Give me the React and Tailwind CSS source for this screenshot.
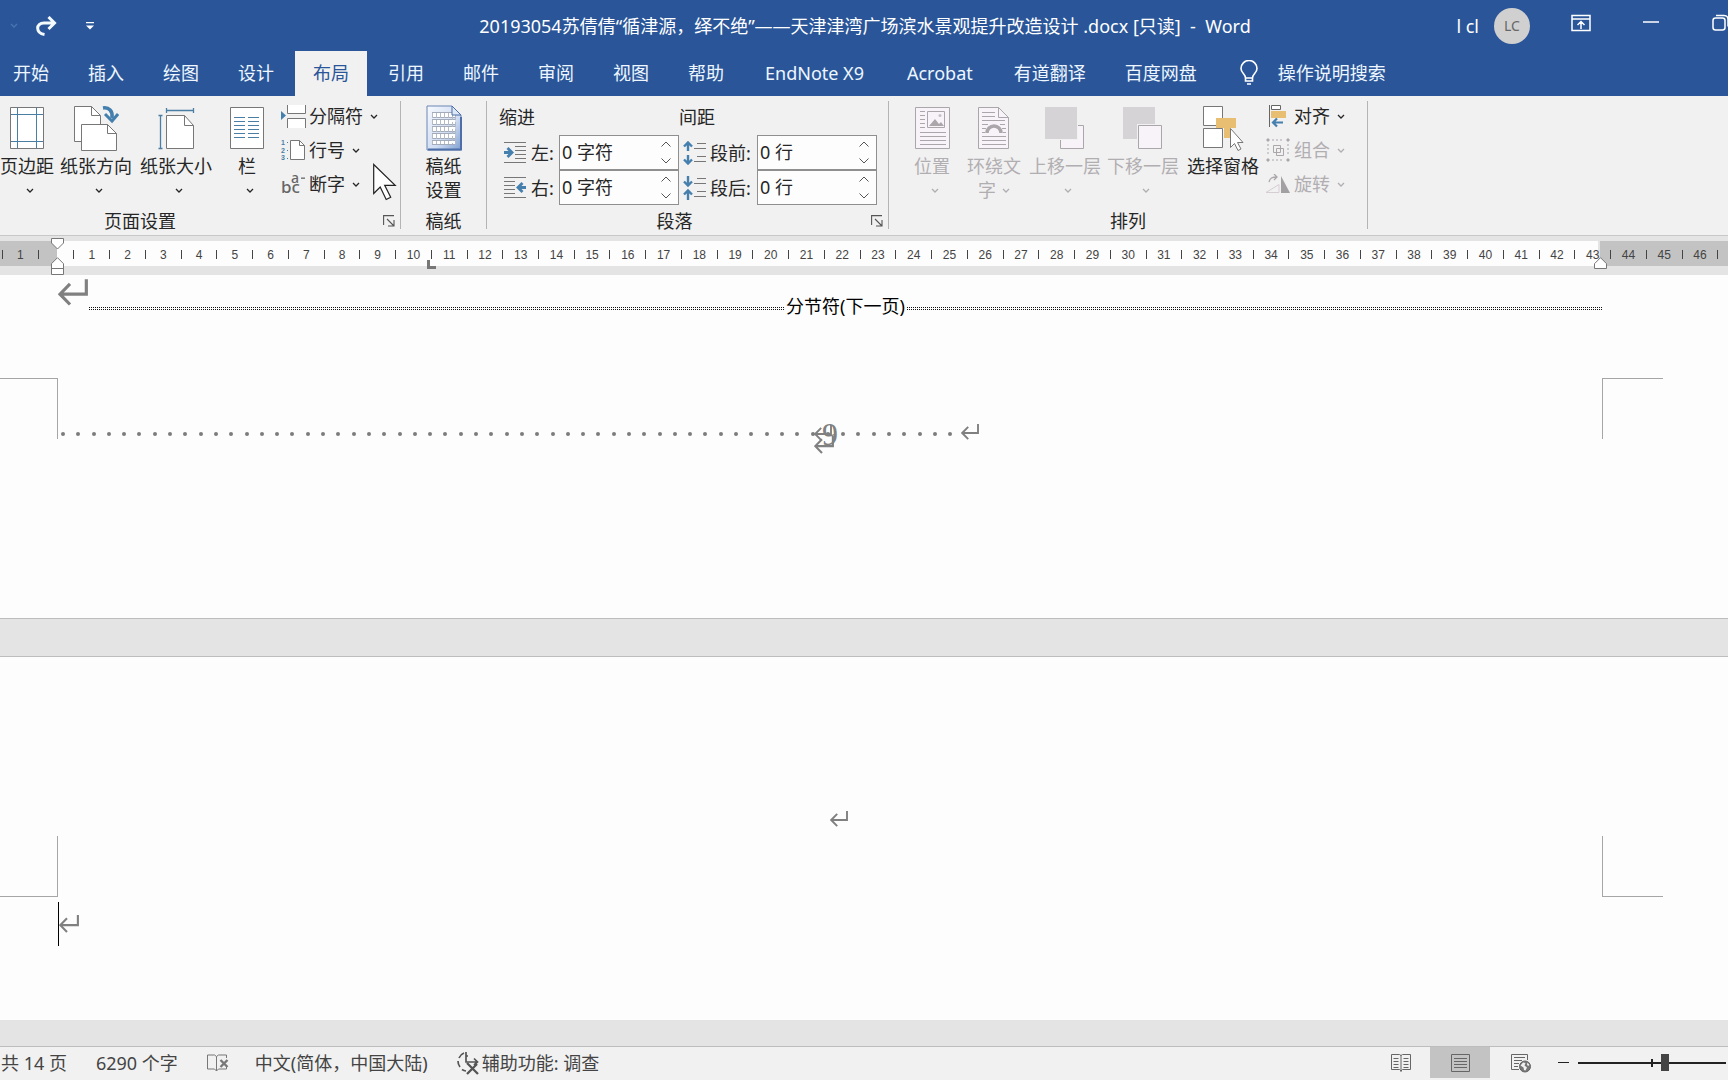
// src/App.jsx
import React, { useState } from "react";

const TABS = [
  "开始",
  "插入",
  "绘图",
  "设计",
  "布局",
  "引用",
  "邮件",
  "审阅",
  "视图",
  "帮助",
  "EndNote X9",
  "Acrobat",
  "有道翻译",
  "百度网盘",
];
const ADDIN_TABS = ["EndNote X9", "Acrobat"];

// ruler cells, one per character: -1, 0, 1 ... 46
const RULER = Array.from({ length: 48 }, (_, i) => i - 1);
const SPACE_DOTS = Array.from({ length: 59 }, (_, i) => i);

/* ---------- small shared pieces ---------- */

function Chevron({ className = "" }) {
  return (
    <svg width="8" height="5" viewBox="0 0 8 5" fill="none" stroke="currentColor" strokeWidth="1.3" className={className}>
      <path d="M1 1l3 3 3-3" />
    </svg>
  );
}

function ReturnMark({ className = "" }) {
  return (
    <svg viewBox="0 0 18 16" fill="none" stroke="#808080" strokeWidth="1.9" className={className}>
      <path d="M17 0v9H1M7.2 2.8L1.2 9l6 6.2" />
    </svg>
  );
}

function Separator() {
  return <div className="w-px h-32 mt-[5px] shrink-0 bg-[#b4b4b4]" />;
}

function BigButton({ icon, label, second, menu = true, disabled, className = "" }) {
  return (
    <button
      disabled={disabled}
      className={`flex flex-col items-center shrink-0 whitespace-nowrap disabled:text-[#b1aeb1] ${className}`}
    >
      <span className="flex items-center justify-center h-[44px] mb-1">{icon}</span>
      <span className="leading-6">{label}</span>
      <span className="flex items-center justify-center h-6 leading-6">
        {second}
        {menu && <Chevron className="ml-[6px]" />}
      </span>
    </button>
  );
}

function SmallButton({ icon, label, disabled }) {
  return (
    <button disabled={disabled} className="flex items-center h-[34px] whitespace-nowrap disabled:text-[#b1aeb1]">
      <span className="flex justify-center w-[26px] mr-[3px]">{icon}</span>
      {label}
      <Chevron className="ml-[7px]" />
    </button>
  );
}

function Group({ label, launcher, className = "", children }) {
  return (
    <div role="group" aria-label={label} className={`flex flex-col shrink-0 pt-[10px] ${className}`}>
      <div className="flex h-[97px]">{children}</div>
      <div className="flex items-center mt-[6px] h-6">
        <span className="flex-1 text-center leading-6">{label}</span>
        {launcher && (
          <button aria-label={`${label}选项`} className="w-[26px] pl-1 flex justify-center">
            <svg width="12" height="12" viewBox="0 0 12 12" fill="none" stroke="#555" strokeWidth="1.1">
              <path d="M.6 10V.6H11M4 4l6.500 6.500M11 5v6H5" />
            </svg>
          </button>
        )}
      </div>
    </div>
  );
}

function SpinField({ id, icon, label, labelClass, value, className = "" }) {
  const [text, setText] = useState(value);
  const [num, unit] = text.split(" ");
  const step = (d) => setText(`${Math.max(0, Number(num) + d)} ${unit}`);

  return (
    <div className={`flex items-center h-[35px] ${className}`}>
      <span className="w-6 mr-[3px] flex">{icon}</span>
      <label htmlFor={id} className={`whitespace-nowrap ${labelClass}`}>
        {label}
      </label>
      <div className="flex w-[120px] h-[35px] border border-[#8f8f8f] bg-[#fdfdfd]">
        <input
          id={id}
          value={text}
          onChange={(e) => setText(e.target.value)}
          className="min-w-0 flex-1 pl-[2px] pb-[2px] bg-transparent outline-none"
        />
        <div className="flex flex-col w-6 text-[#555]">
          <button aria-label="增加" onClick={() => step(1)} className="flex-1 flex items-center justify-center">
            <svg width="10" height="6" viewBox="0 0 10 6" fill="none" stroke="currentColor">
              <path d="M.5 5.500L5 1l4.500 4.500" />
            </svg>
          </button>
          <button aria-label="减少" onClick={() => step(-1)} className="flex-1 flex items-center justify-center">
            <svg width="10" height="6" viewBox="0 0 10 6" fill="none" stroke="currentColor">
              <path d="M.5.500L5 5 9.500.500" />
            </svg>
          </button>
        </div>
      </div>
    </div>
  );
}

/* ---------- ribbon icons ---------- */

const MarginsIcon = () => (
  <svg width="34" height="42" viewBox="0 0 34 42" fill="none">
    <path d="M.5.5h33v41H.5z" fill="#fff" stroke="#777" />
    <path d="M7.500 1v40M26.500 1v40M1 7.500h32M1 34.500h32" stroke="#4a7ea5" />
  </svg>
);

const OrientationIcon = () => (
  <svg width="45" height="46" viewBox="0 0 45 46" fill="none" stroke="#777">
    <path d="M.5 1.500h17l9 9v26H.5z" fill="#fff" />
    <path d="M17.500 1.500v9h9" />
    <path d="M7.500 19.500h26l9 9v17h-35z" fill="#fff" />
    <path d="M33.500 19.500v9h9" />
    <path d="M29 3c6-1 10 3 9 10" stroke="#457fae" strokeWidth="3.500" />
    <path d="M31 9l7 7 6-7" stroke="#457fae" strokeWidth="3" />
  </svg>
);

const SizeIcon = () => (
  <svg width="37" height="44" viewBox="0 0 37 44" fill="none">
    <path d="M8.500 9.500h18l9 10v23h-27z" fill="#fff" stroke="#777" />
    <path d="M26.500 9.500v10h9" stroke="#777" />
    <path d="M8.500 2v5M35.500 2v5M8 4.500h28M.5 9.500h4M.5 42.500h4M2.500 9.500v33" stroke="#4a7ea5" strokeWidth="1.300" />
  </svg>
);

const ColumnsIcon = () => (
  <svg width="34" height="42" viewBox="0 0 34 42" fill="none">
    <path d="M.5.5h33v41H.5z" fill="#fff" stroke="#777" />
    <path
      d="M4 10.500h11M4 14.500h11M4 18.500h11M4 22.500h11M4 26.500h11M4 30.500h11M18 10.500h11M18 14.500h11M18 18.500h11M18 22.500h11M18 26.500h11M18 30.500h11"
      stroke="#4a7ea5"
    />
  </svg>
);

const BreaksIcon = () => (
  <svg width="25" height="24" viewBox="0 0 25 24" fill="none">
    <path d="M6.500 1v8.500h18V1M6.500 24v-9.500h18V24" fill="#fff" stroke="#777" />
    <path d="M0 7l5 4.500L0 16z" fill="#457fae" />
  </svg>
);

const LineNumbersIcon = () => (
  <svg width="25" height="24" viewBox="0 0 25 24" fill="none">
    <path d="M9.500 2.500h9l5 5v14h-14z" fill="#fff" stroke="#777" />
    <path d="M18.500 2.500v5h5" stroke="#777" />
    <g fill="#4a7ea5" fontFamily="Liberation Sans" fontSize="7" fontWeight="700">
      <text x="0" y="7">1</text>
      <text x="0" y="15">2</text>
      <text x="0" y="22">3</text>
    </g>
    <path d="M6 4.500h1M6 12.500h1M6 20.500h1" stroke="#4a7ea5" />
  </svg>
);

const HyphenIcon = () => (
  <svg width="25" height="34" viewBox="0 0 25 34" fill="#666" fontFamily="Noto Sans" fontWeight="500">
    <text x="10" y="16" fontSize="14">a</text>
    <text x="0" y="26" fontSize="17">bc</text>
    <path d="M20 10.500h4v1.300h-4z" />
  </svg>
);

const GridPaperIcon = () => (
  <svg width="36" height="46" viewBox="0 0 36 46" fill="none">
    <defs>
      <linearGradient id="paper" x1="0" y1="0" x2="1" y2="1">
        <stop offset="0" stopColor="#f6f9fe" />
        <stop offset="0.600" stopColor="#cfdcf2" />
        <stop offset="1" stopColor="#7f9fd0" />
      </linearGradient>
    </defs>
    <path d="M1 1h25l9 9v35H1z" fill="url(#paper)" stroke="#6b86b4" />
    <path d="M2 44.500h33V12" stroke="#4d6ea8" strokeWidth="2" />
    <path d="M6 8h23v4H6zM6 15h23v4H6zM6 22h23v4H6zM6 29h23v4H6zM6 36h23v3H6z" fill="#fff" />
    <path d="M6 7.500h23M6 12.500h23M6 14.500h23M6 19.500h23M6 21.500h23M6 26.500h23M6 28.500h23M6 33.500h23M6 35.500h23M6 39.500h23" stroke="#a3abba" />
    <path
      d="M6.500 8v31M10.500 8v31M14.500 8v31M18.500 8v31M22.500 8v31M26.500 10v29M29.500 10v29"
      stroke="#b3bac8"
      strokeDasharray="5 2"
    />
    <path d="M26 1v9h9z" fill="#dfe8f7" stroke="#4d6ea8" />
  </svg>
);

const IndentIcon = ({ right }) => (
  <svg width="24" height="22" viewBox="0 0 24 22" fill="none">
    {right ? (
      <>
        <path d="M0 .5h22M0 4.500h11M0 8.500h11M0 12.500h11M0 16.500h11M0 20.500h22" stroke="#777" />
        <path d="M22 10.500h-7M18.500 6l-4.500 4.500 4.500 4.500" stroke="#457fae" strokeWidth="2.800" />
      </>
    ) : (
      <>
        <path d="M0 .5h22M11 4.500h11M11 8.500h11M11 12.500h11M11 16.500h11M0 20.500h22" stroke="#777" />
        <path d="M0 10.500h7M3.500 6L8 10.500 3.500 15" stroke="#457fae" strokeWidth="2.800" />
      </>
    )}
  </svg>
);

const SpacingIcon = ({ after }) => (
  <svg width="24" height="24" viewBox="0 0 24 24" fill="none">
    <path d="M14 2.500h9M11 7.500h12M14 15.500h9M11 20.500h12" stroke="#777" />
    {after ? (
      <path d="M5 0v9M1 5.500l4 4 4-4M5 24v-9M1 18.500l4-4 4 4" stroke="#457fae" strokeWidth="2.400" />
    ) : (
      <path d="M5 10V2M1 5.500l4-4 4 4M5 14v8M1 18.500l4 4 4-4" stroke="#457fae" strokeWidth="2.400" />
    )}
  </svg>
);

const PositionIcon = () => (
  <svg width="35" height="42" viewBox="0 0 35 42" fill="none" stroke="#aaa6aa">
    <path d="M.5.5h34v41H.5z" fill="#f8f3f8" />
    <path d="M5 4.500h5M5 8.500h5M5 12.500h5M5 16.500h5M5 20.500h5M5 25.500h26M5 29.500h26M5 33.500h26M5 37.500h26" />
    <path d="M12.500 4.500h17v16h-17z" />
    <path d="M14 19l6-7 4 5 2-2 3 4z" fill="#aaa6aa" stroke="none" />
    <circle cx="25" cy="8.500" r="1.500" fill="#c4c0c4" stroke="none" />
  </svg>
);

const WrapIcon = () => (
  <svg width="32" height="42" viewBox="0 0 32 42" fill="none" stroke="#aaa6aa">
    <path d="M.5.5h20l10 10v31H.5z" fill="#f8f3f8" />
    <path d="M20.500.5v10h10M4 5.500h13M4 9.500h13M4 13.500h23M4 17.500h6M22 17.500h5M4 21.500h4M24 21.500h4M4 29.500h24M4 33.500h24M4 37.500h24" />
    <path d="M9 26a7 7 0 0 1 14 0" strokeWidth="3.500" />
    <path d="M4 25.500h3M25 25.500h3" />
  </svg>
);

const ForwardIcon = () => (
  <svg width="40" height="42" viewBox="0 0 40 42">
    <path d="M15.500 18.500h23v23h-23z" fill="#f8f3f8" stroke="#aaa6aa" />
    <path d="M0 0h33v33H0z" fill="#f1f1f1" />
    <path d="M0 0h32v32H0z" fill="#d6d3d7" />
  </svg>
);

const BackwardIcon = () => (
  <svg width="40" height="42" viewBox="0 0 40 42">
    <path d="M0 0h32v32H0z" fill="#d6d3d7" />
    <path d="M14 17h25v25H14z" fill="#f1f1f1" />
    <path d="M15.500 18.500h23v23h-23z" fill="#f8f3f8" stroke="#aaa6aa" />
  </svg>
);

const SelectionPaneIcon = () => (
  <svg width="42" height="46" viewBox="0 0 42 46">
    <path d="M1.500 1.500h19v19h-19zM1.500 23.500h19v19h-19z" fill="#fff" stroke="#777" />
    <path d="M14 13h20v10H28v10h-6V23h-8z" fill="#e8bf72" />
    <path d="M28.500 23.500v19l4-4 3.500 7 3-1.500-3.500-6.500h5.500z" fill="#fff" stroke="#777" />
  </svg>
);

const AlignIcon = () => (
  <svg width="20" height="24" viewBox="0 0 20 24" fill="none">
    <path d="M1.500 1v22" stroke="#666" />
    <path d="M3.500 1.500h9v4h-9z" stroke="#666" fill="#fff" />
    <path d="M3 7h15v7H3z" fill="#e8bf72" />
    <path d="M15 18.500H6M9 14.500l-4 4 4 4" stroke="#457fae" strokeWidth="2.200" />
  </svg>
);

const GroupIcon = () => (
  <svg width="24" height="24" viewBox="0 0 24 24" fill="none" stroke="#aaa6aa">
    <path d="M7.500 7.500h7v7h-7zM10.500 10.500h7v7h-7z" />
    <path d="M2 6v12M22 6v12M6 2h12M6 22h12" strokeDasharray="2 2" />
    <path d="M1 1h2v2H1zM21 1h2v2h-2zM1 21h2v2H1zM21 21h2v2h-2z" fill="#aaa6aa" />
  </svg>
);

const RotateIcon = () => (
  <svg width="26" height="20" viewBox="0 0 26 20" fill="none" stroke="#aaa6aa">
    <path d="M1 18.500l13-8v8z" stroke="#d6cdd3" />
    <path d="M16 2l9 17h-9z" fill="#a3a0a3" stroke="none" />
    <path d="M4 8c1-4 3-5 8-5M9 0l3 3-3 3" strokeWidth="1.300" />
  </svg>
);

/* ---------- window parts ---------- */

function TitleBar() {
  return (
    <div className="flex items-center h-[51px] text-white">
      <div className="flex-1 flex items-center pl-[10px]">
        <Chevron className="mr-[17px] text-[#4a74b0]" />
        <button aria-label="恢复">
          <svg width="22" height="20" viewBox="0 0 22 20" fill="none" stroke="#f4fbff" strokeWidth="3">
            <path d="M9.500 18.500C.5 17 .5 7 9 7h10M13.500 1l6 6-6 6" />
          </svg>
        </button>
        <button aria-label="自定义快速访问工具栏" className="ml-[29px]">
          <svg width="8" height="8" viewBox="0 0 8 8" fill="#fff">
            <path d="M0 0h8v1.300H0zM0 3.500h8l-4 4z" />
          </svg>
        </button>
      </div>
      <h1 className="mr-2 whitespace-pre">
        20193054苏倩倩“循津源，绎不绝”——天津津湾广场滨水景观提升改造设计 .docx [只读]{"  -  "}Word
      </h1>
      <div className="flex-1 flex items-center justify-end">
        <span>l cl</span>
        <span className="flex items-center justify-center w-9 h-9 ml-[15px] rounded-full bg-[#d0d0d0] text-[#666] text-sm">
          LC
        </span>
        <button aria-label="功能区显示选项" className="ml-[41px]">
          <svg width="20" height="20" viewBox="0 0 20 20" fill="none" stroke="#fff" strokeWidth="1.500" className="mb-[6px]">
            <path d="M1 2.500h18v15H1zM1 6h18M10 16V9M6.500 12L10 8.500l3.500 3.500" />
          </svg>
        </button>
        <button aria-label="最小化" className="ml-[52px]">
          <svg width="16" height="20" viewBox="0 0 16 20" stroke="#fff" strokeWidth="1.500" className="mb-[6px]">
            <path d="M0 9h16" />
          </svg>
        </button>
        <button aria-label="向下还原" className="ml-[53px]">
          <svg width="16" height="20" viewBox="0 0 16 20" fill="none" stroke="#fff" strokeWidth="1.500" className="mb-[6px]">
            <rect x="1" y="5" width="12" height="12" rx="2.500" />
            <path d="M4 2.500h8q4 0 4 4v7" />
          </svg>
        </button>
      </div>
    </div>
  );
}

function TabBar() {
  const [active, setActive] = useState("布局");
  return (
    <nav className="flex items-stretch h-[45px] gap-[3px] -ml-[5px] text-[#eef6ff] whitespace-nowrap">
      {TABS.map((tab) => (
        <button
          key={tab}
          onClick={() => setActive(tab)}
          className={`pb-[2px] ${ADDIN_TABS.includes(tab) ? "px-5" : "px-[18px]"} ${
            tab === active ? "bg-[#f1f1f1] text-[#2a5699]" : ""
          }`}
        >
          {tab}
        </button>
      ))}
      <button className="flex items-center pb-[2px] ml-[22px]">
        <svg width="18" height="25" viewBox="0 0 18 25" fill="none" stroke="#fff" strokeWidth="1.600" className="mr-5">
          <path d="M5.500 18c0-4-4.500-5-4.500-9.500a8 8 0 0 1 16 0C17 13 12.500 14 12.500 18zM5.500 18v3h7v-3M7 24h4" />
        </svg>
        操作说明搜索
      </button>
    </nav>
  );
}

function Ribbon() {
  return (
    <div className="relative flex h-[140px] bg-[#f1f1f1] border-b border-[#c8c8c8]">
      {/* first group runs off the left edge of the window */}
      <Group label="页面设置" launcher className="w-[494px] -ml-[94px]">
        <div className="flex pl-[92px]">
          <BigButton icon={<MarginsIcon />} label="页边距" className="w-[58px]" />
          <BigButton icon={<OrientationIcon />} label="纸张方向" className="w-20" />
          <BigButton icon={<SizeIcon />} label="纸张大小" className="w-20" />
          <BigButton icon={<ColumnsIcon />} label="栏" className="w-[62px]" />
          <div className="flex flex-col items-start -mt-[7px] ml-[2px]">
            <SmallButton icon={<BreaksIcon />} label="分隔符" />
            <SmallButton icon={<LineNumbersIcon />} label="行号" />
            <SmallButton icon={<HyphenIcon />} label="断字" />
          </div>
        </div>
      </Group>
      <Separator />

      <Group label="稿纸" className="w-[85px]">
        <BigButton icon={<GridPaperIcon />} label="稿纸" second="设置" menu={false} className="w-full" />
      </Group>
      <Separator />

      <Group label="段落" launcher className="w-[401px]">
        <fieldset className="w-[180px] ml-3">
          <legend className="h-[29px] leading-[22px]">缩进</legend>
          <SpinField
            id="indent-left"
            icon={<IndentIcon />}
            label="左:"
            labelClass="w-7"
            value="0 字符"
            className="pl-[5px]"
          />
          <SpinField
            id="indent-right"
            icon={<IndentIcon right />}
            label="右:"
            labelClass="w-7"
            value="0 字符"
            className="pl-[5px]"
          />
        </fieldset>
        <fieldset className="w-[198px]">
          <legend className="h-[29px] leading-[22px]">间距</legend>
          <SpinField
            id="space-before"
            icon={<SpacingIcon />}
            label="段前:"
            labelClass="w-[47px]"
            value="0 行"
            className="pl-1"
          />
          <SpinField
            id="space-after"
            icon={<SpacingIcon after />}
            label="段后:"
            labelClass="w-[47px]"
            value="0 行"
            className="pl-1"
          />
        </fieldset>
      </Group>
      <Separator />

      <Group label="排列" className="w-[478px]">
        <BigButton disabled icon={<PositionIcon />} label="位置" className="w-[58px] ml-[14px]" />
        <BigButton disabled icon={<WrapIcon />} label="环绕文" second="字" className="w-[66px]" />
        <BigButton disabled icon={<ForwardIcon />} label="上移一层" className="w-[76px]" />
        <BigButton disabled icon={<BackwardIcon />} label="下移一层" className="w-20" />
        <BigButton icon={<SelectionPaneIcon />} label="选择窗格" menu={false} className="w-20" />
        <div className="flex flex-col items-start -mt-[7px] ml-[2px]">
          <SmallButton icon={<AlignIcon />} label="对齐" />
          <SmallButton disabled icon={<GroupIcon />} label="组合" />
          <SmallButton disabled icon={<RotateIcon />} label="旋转" />
        </div>
      </Group>
      <Separator />

      {/* mouse pointer */}
      <svg width="24" height="38" viewBox="0 0 24 38" className="absolute left-[373px] top-[67px]">
        <path d="M.7 1.500v29l6.500-6.500 6 12.500 4.500-2.200-6-12h10.500z" fill="#fff" stroke="#222" strokeWidth="1.200" />
      </svg>
    </div>
  );
}

function Ruler() {
  return (
    <div className="relative pt-[5px] pb-[9px] bg-[#e4e4e4]">
      <div className="grid h-[25px]">
        <div className="col-start-1 row-start-1 flex">
          <div className="w-[57px] bg-[#c3c3c3]" />
          <div className="flex-1 bg-[#fdfdfd]" />
          <div className="w-32 ml-[2px] bg-[#c3c3c3]" />
        </div>
        <div className="col-start-1 row-start-1 flex items-center ml-[2px] mr-[10px] pt-px text-xs leading-[10px] text-[#444] font-[Liberation_Sans]">
          {RULER.map((n) => (
            <span key={n} className="flex-1 basis-0 h-[9px] text-center border-l border-[#444] last:border-r">
              {n === 0 ? "" : Math.abs(n)}
            </span>
          ))}
        </div>
      </div>
      <svg width="13" height="12" viewBox="0 0 13 12" className="absolute left-[51px] top-[2px]">
        <path d="M.5.500h12v4.500l-6 6-6-6z" fill="#fff" stroke="#777" />
      </svg>
      <svg width="13" height="18" viewBox="0 0 13 18" className="absolute left-[51px] top-[21px]">
        <path d="M6.500.700l6 6v10.800H.5V6.700zM.5 11.500h12" fill="#fff" stroke="#777" />
      </svg>
      <div className="absolute left-[427px] top-6 w-[9px] h-[9px] border-l-[3px] border-b-[3px] border-[#777]" />
      <svg width="13" height="12" viewBox="0 0 13 12" className="absolute right-[121px] top-[21px]">
        <path d="M6.500.700l6 6v4.800H.5V6.700z" fill="#fff" stroke="#777" />
      </svg>
    </div>
  );
}

// double dotted rule on both sides of a section break
function BreakLine() {
  return (
    <svg height="3" className="flex-1 min-w-0 mt-[5px]" aria-hidden="true">
      <path d="M0 .5h3000M0 2.500h3000" stroke="#111" strokeDasharray="1 1" />
    </svg>
  );
}

function Document() {
  return (
    <main className="bg-[#e4e4e4]">
      <section className="h-[343px] pt-1 bg-[#fdfdfd]">
        <div className="flex items-center h-[54px] pl-[58px] pr-[126px]">
          <ReturnMark className="w-[30px] h-[27px] mr-px self-start" />
          <BreakLine />
          <span className="px-[2px] text-black">分节符(下一页)</span>
          <BreakLine />
        </div>

        <div className="flex h-[61px] mt-[45px] pr-[65px]">
          <div className="w-[58px] border-t border-r border-[#a6a6a6]" />
          <div className="relative flex-1 flex items-end pb-[3px]">
            <div className="flex justify-between w-[892px] ml-[3px]">
              {SPACE_DOTS.map((i) => (
                <i key={i} className="w-1 h-1 rounded-full bg-[#7c7c7c]" />
              ))}
            </div>
            <ReturnMark className="w-[18px] h-4 ml-2 -mb-1" />
            {/* page number frame sits on top of the footer line */}
            <ReturnMark className="absolute left-[756px] bottom-[-2px] w-[18px] h-4" />
            <ReturnMark className="absolute left-[756px] bottom-[-15px] w-[20px] h-[18px]" />
            <span className="absolute left-[764px] bottom-[-11px] text-[32px] leading-8 text-[#808080] font-[Liberation_Serif]">
              9
            </span>
          </div>
          <div className="w-[61px] border-t border-l border-[#a6a6a6]" />
        </div>
      </section>

      <div className="h-[39px] border-y border-[#bdbdbd]" />

      <section className="h-[363px] pt-[154px] bg-[#fdfdfd]">
        <div className="flex h-[25px] pl-[58px] pr-[126px]">
          <ReturnMark className="w-[18px] h-4 ml-[50%]" />
        </div>
        <div className="flex justify-between h-[61px] pr-[65px]">
          <div className="w-[58px] border-b border-r border-[#a6a6a6]" />
          <div className="w-[61px] border-b border-l border-[#a6a6a6]" />
        </div>
        <div className="flex items-center mt-[5px] ml-[58px]">
          <span className="w-px h-11 bg-black" />
          <ReturnMark className="w-[20px] h-[18px]" />
        </div>
      </section>

      <div className="h-[26px]" />
    </main>
  );
}

function StatusBar() {
  const [zoom, setZoom] = useState(59);
  return (
    <footer className="flex items-center h-[34px] pb-[2px] border-t border-[#bdbdbd] bg-[#f1f1f1] text-[#444] whitespace-nowrap">
      <span className="ml-px">共 14 页</span>
      <span className="ml-[29px]">6290 个字</span>
      <button aria-label="校对" className="ml-[29px]">
        <svg width="22" height="20" viewBox="0 0 22 20" fill="none" stroke="#777">
          <path d="M9.500 3.500L7.500 2H.5v14h7l2 2 2-2h8v-2M9.500 3.500V18M9.500 3.500l2-1.500h8v3" />
          <path d="M13.500 7l7 7M20.500 7l-7 7" strokeWidth="2.400" />
        </svg>
      </button>
      <span className="ml-[26px]">中文(简体，中国大陆)</span>
      <button className="flex items-center ml-[29px]">
        <svg width="22" height="24" viewBox="0 0 22 24" fill="none" stroke="#555" strokeWidth="1.700" className="mr-[3px]">
          <path d="M7 2a9 9 0 0 0-5 5M1 10a9 9 0 0 0 2 6M5 18.500a9 9 0 0 0 4 1.500M9 1v10h11M17 7.500l3.500 3.500-3.500 3M9 5h2" />
          <path d="M10 12l11 11M20 13L10 23" strokeWidth="2.300" />
        </svg>
        辅助功能: 调查
      </button>

      <div className="flex items-center ml-auto h-full pr-[2px]">
        <button aria-label="阅读视图" className="mr-[19px]">
          <svg width="20" height="18" viewBox="0 0 20 18" fill="none" stroke="#666">
            <path d="M.5.500h8l1.500 1 1.500-1h8v15h-8l-1.500 1.500-1.500-1.500h-8zM10 1v17" />
            <path d="M2.500 4.500h5M2.500 7.500h5M2.500 10.500h5M2.500 13.500h5M12.500 4.500h5M12.500 7.500h5M12.500 10.500h5M12.500 13.500h5" />
          </svg>
        </button>
        <button aria-label="页面视图" className="flex items-center justify-center w-[60px] h-full bg-[#c3c3c3]">
          <svg width="19" height="18" viewBox="0 0 19 18" fill="none" stroke="#666">
            <path d="M.5.500h18v17H.5zM3 4.500h13M3 7.500h13M3 10.500h13M3 13.500h13" />
          </svg>
        </button>
        <button aria-label="Web 版式视图" className="ml-[21px]">
          <svg width="21" height="20" viewBox="0 0 21 20" fill="none" stroke="#666">
            <path d="M8 16.500H.5v-15h16V7M3 4.500h11M3 7.500h8M3 10.500h5M3 13.500h4" />
            <circle cx="14" cy="13.500" r="5.500" fill="#777" />
            <path d="M9.500 12.500l2.500-3 2.500.5-1 2.500 2.500 2-1.500 3-1.500-.5-.5-2.500zM16.500 9.500l2 2.500-1.500 1-1-1.500z" fill="#f1f1f1" stroke="none" />
          </svg>
        </button>
        <button aria-label="缩小" className="ml-[26px]">
          <svg width="11" height="10" viewBox="0 0 11 10" stroke="#222">
            <path d="M0 4.500h11" />
          </svg>
        </button>
        <div className="relative flex items-center ml-[9px]">
          <span className="absolute left-[73px] w-[2px] h-2 bg-[#222]" />
          <input
            type="range"
            aria-label="显示比例"
            value={zoom}
            onChange={(e) => setZoom(e.target.value)}
            className="w-[148px] h-[18px] appearance-none bg-transparent [&::-webkit-slider-runnable-track]:h-[2px] [&::-webkit-slider-runnable-track]:bg-[#222] [&::-webkit-slider-thumb]:appearance-none [&::-webkit-slider-thumb]:w-2 [&::-webkit-slider-thumb]:h-[17px] [&::-webkit-slider-thumb]:-mt-2 [&::-webkit-slider-thumb]:bg-[#444]"
          />
        </div>
      </div>
    </footer>
  );
}

export default function App() {
  return (
    <div
      lang="zh-CN"
      className="min-h-screen overflow-hidden bg-[#e4e4e4] text-lg leading-6 text-[#262626] font-['Noto_Sans','Noto_Sans_CJK_SC',sans-serif]"
    >
      <header className="bg-[#2a5699]">
        <TitleBar />
        <TabBar />
      </header>
      <Ribbon />
      <Ruler />
      <Document />
      <StatusBar />
    </div>
  );
}
